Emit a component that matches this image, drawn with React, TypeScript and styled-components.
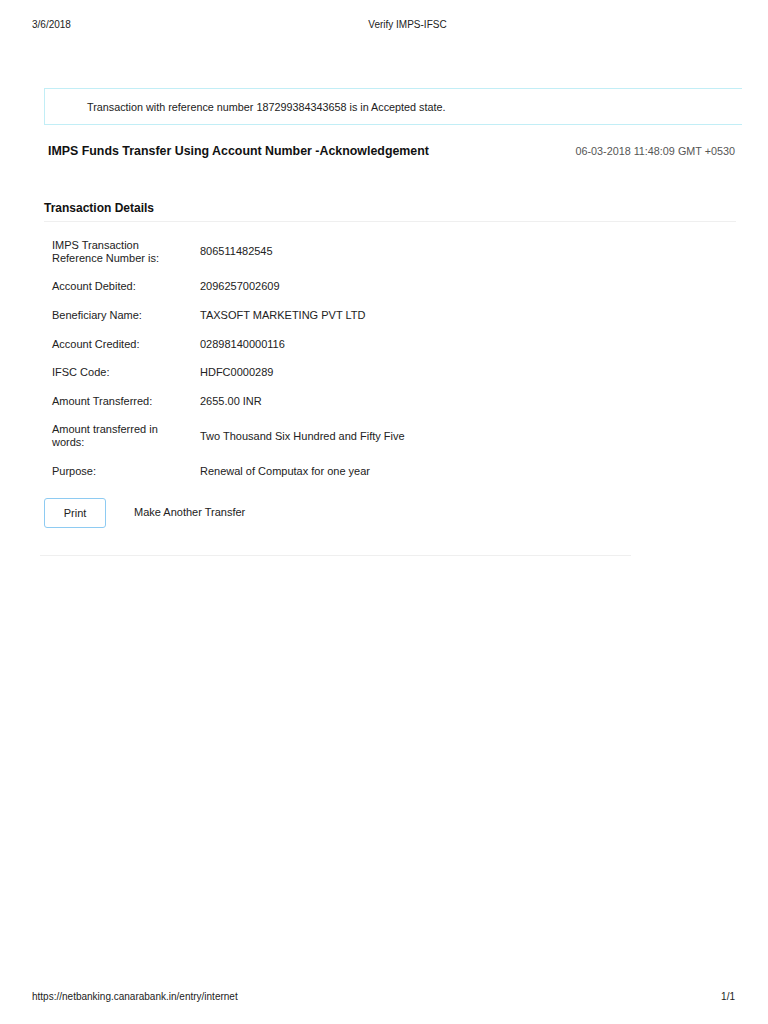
import React from "react";
import styled, { createGlobalStyle } from "styled-components";

// Linhas da tabela de detalhes
interface DetailRow {
    label: string;
    value: string;
}

const rows: DetailRow[] = [
    { label: "IMPS Transaction Reference Number is:", value: "806511482545" },
    { label: "Account Debited:", value: "2096257002609" },
    { label: "Beneficiary Name:", value: "TAXSOFT MARKETING PVT LTD" },
    { label: "Account Credited:", value: "02898140000116" },
    { label: "IFSC Code:", value: "HDFC0000289" },
    { label: "Amount Transferred:", value: "2655.00 INR" },
    { label: "Amount transferred in words:", value: "Two Thousand Six Hundred and Fifty Five" },
    { label: "Purpose:", value: "Renewal of Computax for one year" },
];

const GlobalStyle = createGlobalStyle`
    html, body {
        margin: 0;
        padding: 0;
        background: #fff;
    }
    body {
        font-family: "Liberation Sans", Arial, sans-serif;
        color: #222;
    }
`;

const Page = styled.div`
    width: 768px;
    height: 1024px;
    display: flex;
    flex-direction: column;
    overflow: hidden;
`;

const PrintHeader = styled.div`
    display: flex;
    align-items: center;
    padding: 19px 32px 0 32px;
    font-size: 10px;
    line-height: 12px;
    color: #222;
`;

const HeaderTitle = styled.div`
    flex: 1;
    text-align: center;
    padding-left: 8px;
`;

const Content = styled.div`
    padding: 57px 0 0 44px;
`;

const Alert = styled.div`
    width: 655px;
    height: 35px;
    display: flex;
    align-items: center;
    padding-left: 42px;
    border: 1px solid #c2eef6;
    border-right: none;
    font-size: 10.8px;
    color: #222;
`;

const TitleRow = styled.div`
    display: flex;
    justify-content: space-between;
    align-items: center;
    margin-top: 19px;
    padding: 0 33px 0 4px;
`;

const Heading = styled.h1`
    margin: 0;
    font-size: 12.4px;
    font-weight: bold;
    color: #111;
`;

const Stamp = styled.div`
    font-size: 10.8px;
    color: #555;
`;

const SectionTitle = styled.h2`
    margin: 43px 0 0 0;
    font-size: 12px;
    font-weight: bold;
    color: #111;
    width: 692px;
    padding-bottom: 6px;
    border-bottom: 1px solid #efefef;
`;

const Table = styled.div`
    display: grid;
    grid-template-columns: 148px 1fr;
    padding: 9px 0 0 8px;
    font-size: 11px;
    line-height: 13px;
    color: #222;
`;

const Cell = styled.div`
    display: flex;
    align-items: center;
    padding: 7.8px 0;
`;

const Label = styled(Cell)`
    padding-right: 12px;
`;

const Actions = styled.div`
    display: flex;
    align-items: center;
    gap: 28px;
    margin-top: 12px;
    font-size: 11px;
`;

const PrintButton = styled.button`
    width: 62px;
    height: 30px;
    background: #fff;
    border: 1px solid #8ecbf2;
    border-radius: 3px;
    font-family: inherit;
    font-size: 11px;
    color: #222;
    padding: 0;
`;

const LinkText = styled.span`
    color: #222;
    margin-top: -2px;
`;

const BottomRule = styled.div`
    margin: 27px 0 0 -4px;
    width: 591px;
    border-top: 1px solid #efefef;
`;

const PrintFooter = styled.div`
    margin-top: auto;
    display: flex;
    justify-content: space-between;
    padding: 0 33px 21px 32px;
    font-size: 10px;
    line-height: 12px;
    color: #222;
`;

const App: React.FC = () => {
    return (
        <Page>
            <GlobalStyle />
            <PrintHeader>
                <span>3/6/2018</span>
                <HeaderTitle>Verify IMPS-IFSC</HeaderTitle>
            </PrintHeader>
            <Content>
                <Alert>Transaction with reference number 187299384343658 is in Accepted state.</Alert>
                <TitleRow>
                    <Heading>IMPS Funds Transfer Using Account Number -Acknowledgement</Heading>
                    <Stamp>06-03-2018 11:48:09 GMT +0530</Stamp>
                </TitleRow>
                <SectionTitle>Transaction Details</SectionTitle>
                <Table>
                    {rows.map((row, index) => (
                        <React.Fragment key={index}>
                            <Label>{row.label}</Label>
                            <Cell>{row.value}</Cell>
                        </React.Fragment>
                    ))}
                </Table>
                <Actions>
                    <PrintButton>Print</PrintButton>
                    <LinkText>Make Another Transfer</LinkText>
                </Actions>
                <BottomRule />
            </Content>
            <PrintFooter>
                <span>https://netbanking.canarabank.in/entry/internet</span>
                <span>1/1</span>
            </PrintFooter>
        </Page>
    );
};

export default App;
